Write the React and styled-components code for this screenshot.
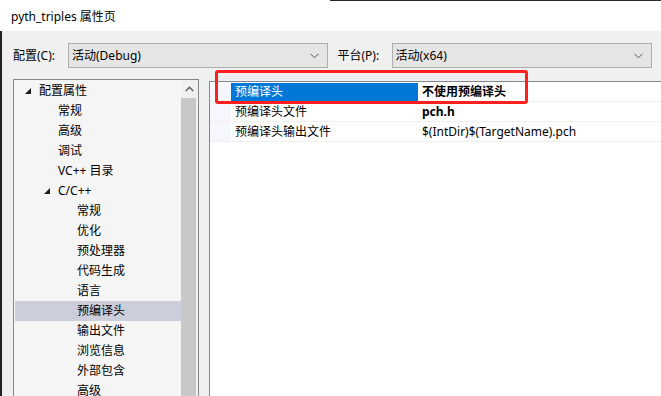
import React from "react";
import styled, { createGlobalStyle } from "styled-components";

const Global = createGlobalStyle`
  html, body { margin: 0; padding: 0; background: #f0f0f0; }
  body { font-family: "Noto Sans", "Noto Sans CJK SC", sans-serif; font-size: 12px; color: #000; }
  * { box-sizing: border-box; }
`;

const Window = styled.div`
  width: 661px;
  height: 396px;
  overflow: hidden;
  display: flex;
  flex-direction: column;
  background: #f0f0f0;
`;

const TitleBar = styled.div`
  position: relative;
  height: 31px;
  flex: none;
  background: #fff;
  padding-left: 11px;
  display: flex;
  align-items: center;
  font-size: 12px;
  color: #000;
  &::after {
    content: "";
    position: absolute;
    top: 0;
    left: 330px;
    right: 0;
    height: 1px;
    background: #2a2a2a;
  }
`;

const Body = styled.div`
  flex: 1;
  min-height: 0;
  border-left: 2px solid #232323;
  padding: 12px 9px 0 11px;
  display: flex;
  flex-direction: column;
`;

const ConfigRow = styled.div`
  display: flex;
  gap: 10px;
  height: 25px;
`;

const Field = styled.div`
  flex: 1;
  display: flex;
  align-items: center;
`;

const Label = styled.span`
  width: ${(p) => p.$w}px;
  flex: none;
  line-height: 16px;
`;

const Select = styled.div`
  flex: 1;
  height: 25px;
  border: 1px solid #adadad;
  background: #e5e5e5;
  display: flex;
  align-items: center;
  justify-content: space-between;
  padding: 0 8px 0 3px;
  line-height: 16px;
`;

const Chevron = () => (
  <svg width="9" height="6" viewBox="0 0 9 6">
    <path d="M0.5 0.8 L4.5 4.8 L8.5 0.8" fill="none" stroke="#555" strokeWidth="1" />
  </svg>
);

const Content = styled.div`
  flex: 1;
  min-height: 0;
  margin-top: 11px;
  margin-right: -9px;
  display: flex;
  align-items: flex-start;
`;

const TreePanel = styled.div`
  width: 186px;
  height: 330px;
  flex: none;
  border: 1px solid #828790;
  background: #f5f5f5;
  display: flex;
`;

const TreeList = styled.div`
  flex: 1;
  padding-top: 1px;
  display: flex;
  flex-direction: column;
`;

const TreeRow = styled.div`
  height: 20px;
  display: flex;
  align-items: center;
  margin-left: 1px;
  padding-left: ${(p) => 10 + p.$level * 19}px;
  background: ${(p) => (p.$selected ? "#cccedb" : "transparent")};
  line-height: 16px;
  white-space: nowrap;
`;

const Toggle = styled.span`
  width: 14px;
  flex: none;
  display: flex;
  align-items: center;
`;

const Triangle = () => (
  <svg width="6" height="6" viewBox="0 0 6 6">
    <polygon points="6,0 6,6 0,6" fill="#1e1e1e" />
  </svg>
);

const ScrollBar = styled.div`
  width: 17px;
  flex: none;
  background: #f0f0f0;
  display: flex;
  flex-direction: column;
`;

const ScrollArrow = styled.div`
  height: 18px;
  display: flex;
  align-items: center;
  justify-content: center;
`;

const ScrollThumb = styled.div`
  flex: 1;
  width: 15px;
  background: #c8c8c8;
`;

const RightPanel = styled.div`
  position: relative;
  flex: 1;
  height: 330px;
  margin-left: 10px;
  margin-top: 2px;
  border-left: 1px solid #828790;
  border-top: 1px solid #828790;
  background: #fff;
`;

const PropRow = styled.div`
  display: flex;
  height: 20px;
  border-bottom: 1px solid #f0f0f0;
`;

const Gutter = styled.div`
  width: 21px;
  flex: none;
  background: #f5f7fc;
`;

const NameCell = styled.div`
  width: 187px;
  flex: none;
  display: flex;
  align-items: center;
  padding-left: 4px;
  margin-top: 1px;
  line-height: 16px;
  background: ${(p) => (p.$selected ? "#0078d7" : "transparent")};
  color: ${(p) => (p.$selected ? "#fff" : "#000")};
`;

const ValueCell = styled.div`
  flex: 1;
  display: flex;
  align-items: center;
  padding-left: 4px;
  line-height: 16px;
  font-weight: ${(p) => (p.$bold ? 700 : 400)};
  white-space: nowrap;
`;

const Annotation = styled.div`
  position: absolute;
  left: 5px;
  top: -12px;
  width: 313px;
  height: 34px;
  border: 3px solid #fe1f1f;
  border-radius: 3px;
  pointer-events: none;
`;

const tree = [
  { label: "配置属性", level: 0, toggle: true },
  { label: "常规", level: 1 },
  { label: "高级", level: 1 },
  { label: "调试", level: 1 },
  { label: "VC++ 目录", level: 1 },
  { label: "C/C++", level: 1, toggle: true },
  { label: "常规", level: 2 },
  { label: "优化", level: 2 },
  { label: "预处理器", level: 2 },
  { label: "代码生成", level: 2 },
  { label: "语言", level: 2 },
  { label: "预编译头", level: 2, selected: true },
  { label: "输出文件", level: 2 },
  { label: "浏览信息", level: 2 },
  { label: "外部包含", level: 2 },
  { label: "高级", level: 2 },
];

const props = [
  { name: "预编译头", value: "不使用预编译头", bold: true, selected: true },
  { name: "预编译头文件", value: "pch.h", bold: true },
  { name: "预编译头输出文件", value: "$(IntDir)$(TargetName).pch" },
];

export default function App() {
  return (
    <>
      <Global />
      <Window>
        <TitleBar>pyth_triples 属性页</TitleBar>
        <Body>
          <ConfigRow>
            <Field>
              <Label $w={55}>配置(C):</Label>
              <Select>
                <span>活动(Debug)</span>
                <Chevron />
              </Select>
            </Field>
            <Field>
              <Label $w={54}>平台(P):</Label>
              <Select>
                <span>活动(x64)</span>
                <Chevron />
              </Select>
            </Field>
          </ConfigRow>
          <Content>
            <TreePanel>
              <TreeList>
                {tree.map((t, i) => (
                  <TreeRow key={i} $level={t.level} $selected={t.selected}>
                    <Toggle>{t.toggle && <Triangle />}</Toggle>
                    <span>{t.label}</span>
                  </TreeRow>
                ))}
              </TreeList>
              <ScrollBar>
                <ScrollArrow>
                  <svg width="9" height="6" viewBox="0 0 9 6">
                    <path d="M0.8 5 L4.5 1.3 L8.2 5" fill="none" stroke="#606060" strokeWidth="1.6" />
                  </svg>
                </ScrollArrow>
                <ScrollThumb />
              </ScrollBar>
            </TreePanel>
            <RightPanel>
              {props.map((p, i) => (
                <PropRow key={i}>
                  <Gutter />
                  <NameCell $selected={p.selected}>{p.name}</NameCell>
                  <ValueCell $bold={p.bold}>{p.value}</ValueCell>
                </PropRow>
              ))}
              <Annotation />
            </RightPanel>
          </Content>
        </Body>
      </Window>
    </>
  );
}
